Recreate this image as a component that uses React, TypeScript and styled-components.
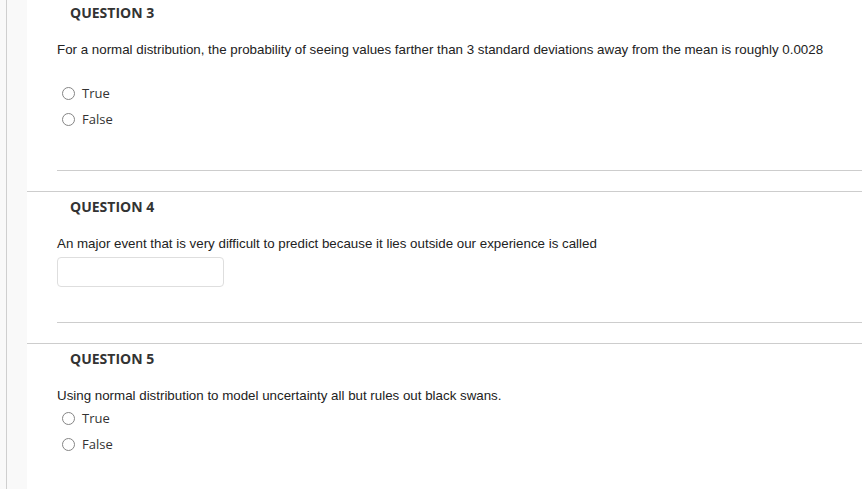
import styled, { createGlobalStyle } from "styled-components";

const GlobalStyle = createGlobalStyle`
  html, body {
    margin: 0;
    padding: 0;
    background: #ffffff;
  }
  * {
    box-sizing: border-box;
  }
`;

type Choice = { id: string; label: string };

const App = () => {
  const tf: Choice[] = [
    { id: "true", label: "True" },
    { id: "false", label: "False" },
  ];

  return (
    <>
      <GlobalStyle />
      <Page>
        <Rail>
          <RailLine />
        </Rail>
        <Main>
          <Question>
            <Header>QUESTION 3</Header>
            <Prompt>
              For a normal distribution, the probability of seeing values farther than 3 standard deviations away from
              the mean is roughly 0.0028
            </Prompt>
            <Options $gap={22}>
              {tf.map((c) => (
                <OptionRow key={c.id}>
                  <Radio type="radio" name="q3" />
                  <OptionLabel>{c.label}</OptionLabel>
                </OptionRow>
              ))}
            </Options>
            <InnerRule $gap={38} />
            <OuterRule />
          </Question>

          <Question>
            <Header>QUESTION 4</Header>
            <Prompt>
              An major event that is very difficult to predict because it lies outside our experience is called
            </Prompt>
            <AnswerInput type="text" />
            <InnerRule $gap={35} />
            <OuterRule />
          </Question>

          <Question>
            <Header>QUESTION 5</Header>
            <Prompt>Using normal distribution to model uncertainty all but rules out black swans.</Prompt>
            <Options $gap={1}>
              {tf.map((c) => (
                <OptionRow key={c.id}>
                  <Radio type="radio" name="q5" />
                  <OptionLabel>{c.label}</OptionLabel>
                </OptionRow>
              ))}
            </Options>
          </Question>
        </Main>
      </Page>
    </>
  );
};

export default App;

const Page = styled.div`
  display: flex;
  flex-direction: row;
  min-height: 100vh;
  width: 100%;
`;

const Rail = styled.div`
  flex: none;
  width: 27px;
  background: #f9f9f9;
  padding-left: 6px;
  display: flex;
`;

const RailLine = styled.div`
  width: 1px;
  background: #cfcfcf;
`;

const Main = styled.div`
  flex: 1;
  display: flex;
  flex-direction: column;
  padding-top: 3px;
  background: #ffffff;
`;

const Question = styled.section`
  display: flex;
  flex-direction: column;
`;

const Header = styled.h3`
  margin: 0;
  padding-left: 43px;
  font-family: "Open Sans", "Liberation Sans", sans-serif;
  font-size: 14px;
  font-weight: 700;
  line-height: 19px;
  color: #333333;
`;

const Prompt = styled.p`
  margin: 20px 0 0;
  padding-left: 30px;
  font-family: "Liberation Sans", Arial, sans-serif;
  font-size: 13.33px;
  line-height: 16px;
  color: #222222;
`;

const Options = styled.div<{ $gap: number }>`
  display: flex;
  flex-direction: column;
  margin-top: ${(p) => p.$gap}px;
  padding-left: 35px;
`;

const OptionRow = styled.label`
  display: flex;
  flex-direction: row;
  align-items: center;
  height: 26px;
  gap: 7px;
`;

const Radio = styled.input`
  appearance: none;
  margin: 0;
  width: 13px;
  height: 13px;
  border: 1px solid #858585;
  border-radius: 50%;
  background: #ffffff;
  flex: none;
`;

const OptionLabel = styled.span`
  font-family: "Open Sans", "Liberation Sans", sans-serif;
  font-size: 13px;
  color: #333333;
`;

const AnswerInput = styled.input`
  margin: 5px 0 0 30px;
  width: 167px;
  height: 30px;
  border: 1px solid #dedede;
  border-radius: 4px;
  background: #ffffff;
  outline: none;
`;

const InnerRule = styled.hr<{ $gap: number }>`
  margin: ${(p) => p.$gap}px 0 0 30px;
  border: none;
  height: 1px;
  background: #cdcdcd;
`;

const OuterRule = styled.hr`
  margin: 20px 0 5px;
  border: none;
  height: 1px;
  background: #cdcdcd;
`;
